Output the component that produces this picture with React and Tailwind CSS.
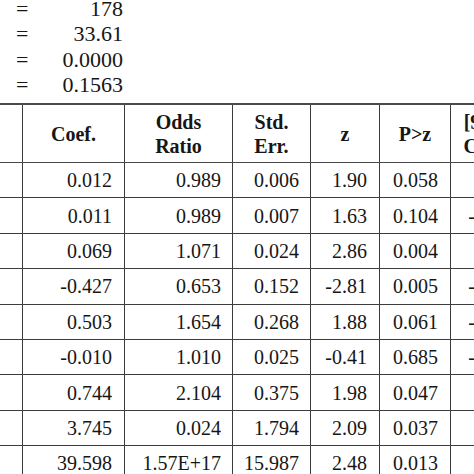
const SUMMARY = ['178', '33.61', '0.0000', '0.1563'];

const ROWS = [
  ['0.012', '0.989', '0.006', '1.90', '0.058', '0.000', '0.024'],
  ['0.011', '0.989', '0.007', '1.63', '0.104', '-0.003', '0.025'],
  ['0.069', '1.071', '0.024', '2.86', '0.004', '0.022', '0.116'],
  ['-0.427', '0.653', '0.152', '-2.81', '0.005', '-0.725', '-0.129'],
  ['0.503', '1.654', '0.268', '1.88', '0.061', '-0.022', '1.028'],
  ['-0.010', '1.010', '0.025', '-0.41', '0.685', '-0.059', '0.039'],
  ['0.744', '2.104', '0.375', '1.98', '0.047', '0.009', '1.479'],
  ['3.745', '0.024', '1.794', '2.09', '0.037', '0.229', '7.261'],
  ['39.598', '1.57E+17', '15.987', '2.48', '0.013', '8.264', '70.932'],
];

// column widths and right padding for the numbers
const COLS = [
  { w: 'w-[22px]', pr: '' },
  { w: 'w-[102px]', pr: 'pr-[12px]' },
  { w: 'w-[108px]', pr: 'pr-[11px]' },
  { w: 'w-[78px]', pr: 'pr-[11px]' },
  { w: 'w-[69px]', pr: 'pr-[12px]' },
  { w: 'w-[71px]', pr: 'pr-[12px]' },
  { w: 'w-[73px]', pr: 'pr-[3px]' },
  { w: 'w-[100px]', pr: 'pr-[12px]' },
];

const HEADERS = [
  null,
  ['Coef.'],
  ['Odds', 'Ratio'],
  ['Std.', 'Err.'],
  ['z'],
  ['P>z'],
  ['[95%', 'Conf.'],
  ['Interval]'],
];

const Cell = ({ index, children, className = '' }) => (
  <div
    className={`${COLS[index].w} shrink-0 h-full flex items-center ${
      index > 0 ? 'border-l border-[#3c3c3c]' : ''
    } ${className}`}
  >
    {children}
  </div>
);

const App = () => {
  return (
    <div className="w-[474px] h-[474px] overflow-hidden bg-white text-[#161616] font-['Liberation_Serif','Times_New_Roman',serif]">
      <div className="mt-[-4.5px] text-[22px] leading-[25.5px]">
        {SUMMARY.map((v) => (
          <div key={v} className="flex">
            <span className="pl-[16px] w-[40px]">=</span>
            <span className="w-[83px] text-right">{v}</span>
          </div>
        ))}
      </div>

      <div className="mt-[5.5px] w-[700px]">
        <div className="flex h-[60px] border-t-2 border-b border-[#4a4a4a] text-[20px] leading-[24px] font-bold">
          {HEADERS.map((h, i) => (
            <Cell key={i} index={i} className="justify-center text-center">
              {h && (
                <div>
                  {h.map((line) => (
                    <div key={line}>{line}</div>
                  ))}
                </div>
              )}
            </Cell>
          ))}
        </div>

        {ROWS.map((row, r) => (
          <div
            key={r}
            className="flex h-[35.4px] border-b border-[#3c3c3c] text-[20px] leading-[24px]"
          >
            <Cell index={0} />
            {row.map((v, c) => (
              <Cell key={c} index={c + 1} className={`justify-end ${COLS[c + 1].pr}`}>
                {v}
              </Cell>
            ))}
          </div>
        ))}
      </div>
    </div>
  );
};

export default App;
